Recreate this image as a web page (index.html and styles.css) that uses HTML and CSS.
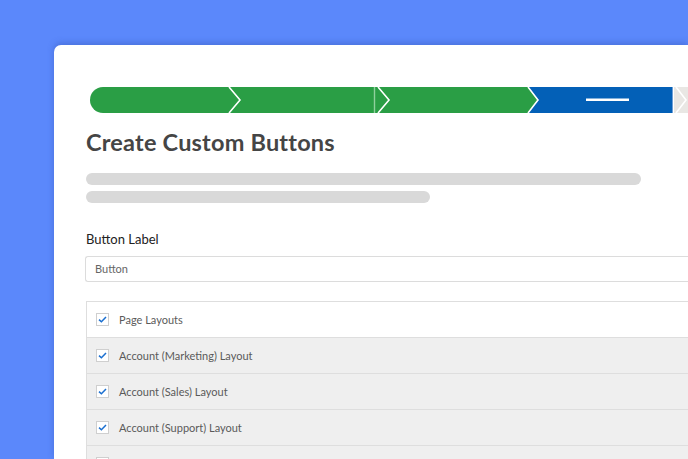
FILE: index.html
```html
<!DOCTYPE html>
<html>
<head>
<meta charset="utf-8">
<link rel="stylesheet" href="styles.css">
</head>
<body>
<div class="card">
  <svg class="progress" width="598" height="26" viewBox="0 0 598 26">
    <path d="M13,0 H438 L448,13 L438,26 H13 A13,13 0 0 1 13,0 Z" fill="#2a9e45"/>
    <path d="M438,0 H582 V26 H438 L448,13 Z" fill="#0360b7"/>
    <line x1="582.5" y1="0" x2="582.5" y2="26" stroke="#6f9fd6" stroke-width="1"/>
    <rect x="584" y="0" width="16" height="26" fill="#e9e7e4"/>
    <polyline points="139,0 150,13 139,26" fill="none" stroke="#fff" stroke-width="1.6"/>
    <line x1="284.5" y1="0" x2="284.5" y2="26" stroke="#8fd09d" stroke-width="1.4"/>
    <polyline points="288,0 299,13 288,26" fill="none" stroke="#fff" stroke-width="1.6"/>
    <polyline points="438,0 448,13 438,26" fill="none" stroke="#fff" stroke-width="1.6"/>
    <polyline points="586,0 596,13 586,26" fill="none" stroke="#fff" stroke-width="1.6"/>
    <rect x="496" y="11.5" width="43" height="2.5" fill="#fff"/>
  </svg>
  <h1 class="title">Create Custom Buttons</h1>
  <div class="skeleton">
    <div class="bar bar-long"></div>
    <div class="bar bar-short"></div>
  </div>
  <div class="field-label">Button Label</div>
  <div class="input">Button</div>
  <div class="list">
    <div class="row"><span class="check"><svg width="9" height="7" viewBox="0 0 9 7"><path d="M1,3.6 L3.4,5.8 L8,1" fill="none" stroke="#1a6fd0" stroke-width="1.5"/></svg></span><span>Page Layouts</span></div>
    <div class="row alt"><span class="check"><svg width="9" height="7" viewBox="0 0 9 7"><path d="M1,3.6 L3.4,5.8 L8,1" fill="none" stroke="#1a6fd0" stroke-width="1.5"/></svg></span><span>Account (Marketing) Layout</span></div>
    <div class="row alt"><span class="check"><svg width="9" height="7" viewBox="0 0 9 7"><path d="M1,3.6 L3.4,5.8 L8,1" fill="none" stroke="#1a6fd0" stroke-width="1.5"/></svg></span><span>Account (Sales) Layout</span></div>
    <div class="row alt"><span class="check"><svg width="9" height="7" viewBox="0 0 9 7"><path d="M1,3.6 L3.4,5.8 L8,1" fill="none" stroke="#1a6fd0" stroke-width="1.5"/></svg></span><span>Account (Support) Layout</span></div>
    <div class="row alt last"><span class="check"></span><span></span></div>
  </div>
</div>
</body>
</html>
```
FILE: styles.css
```css
html, body {
  margin: 0;
  padding: 0;
  width: 688px;
  height: 459px;
  overflow: hidden;
}
body {
  background: #5b88fb;
  padding: 45px 0 0 54px;
  box-sizing: border-box;
  font-family: Lato, "Liberation Sans", sans-serif;
}
.card {
  width: 634px;
  height: 414px;
  overflow: hidden;
  background: #fff;
  border-radius: 7px 0 0 0;
  box-shadow: 0 -2px 6px rgba(40, 70, 160, 0.35);
  padding: 42px 0 0 32px;
  box-sizing: border-box;
}
.progress {
  display: block;
  margin-left: 4px;
}
.title {
  margin: 14px 0 0 0;
  font-size: 23.5px;
  line-height: 30px;
  font-weight: 700;
  letter-spacing: 0.2px;
  color: #454545;
}
.skeleton {
  margin-top: 16px;
  display: flex;
  flex-direction: column;
  gap: 6px;
}
.bar {
  height: 12px;
  border-radius: 6px;
  background: #d9d9d9;
}
.bar-long { width: 555px; }
.bar-short { width: 344px; }
.field-label {
  margin-top: 27px;
  font-size: 13px;
  line-height: 18px;
  color: #222;
}
.input {
  margin-top: 8px;
  margin-left: -1px;
  height: 26px;
  border: 1px solid #dcdcdc;
  border-right: none;
  border-radius: 3px 0 0 3px;
  box-sizing: border-box;
  padding-left: 9px;
  font-size: 11px;
  line-height: 24px;
  color: #666;
}
.list {
  margin-top: 19px;
  border-top: 1px solid #dedede;
  border-left: 1px solid #dedede;
}
.row {
  height: 36px;
  box-sizing: border-box;
  border-bottom: 1px solid #dedede;
  display: flex;
  align-items: center;
  gap: 10px;
  padding-left: 9px;
  font-size: 11px;
  color: #5a5a5a;
}
.row.alt { background: #efefef; }
.row.last { align-items: flex-start; padding-top: 11px; }
.check {
  width: 13px;
  height: 13px;
  box-sizing: border-box;
  background: #fff;
  border: 1px solid #cfcfcf;
  display: flex;
  align-items: center;
  justify-content: center;
}
```
